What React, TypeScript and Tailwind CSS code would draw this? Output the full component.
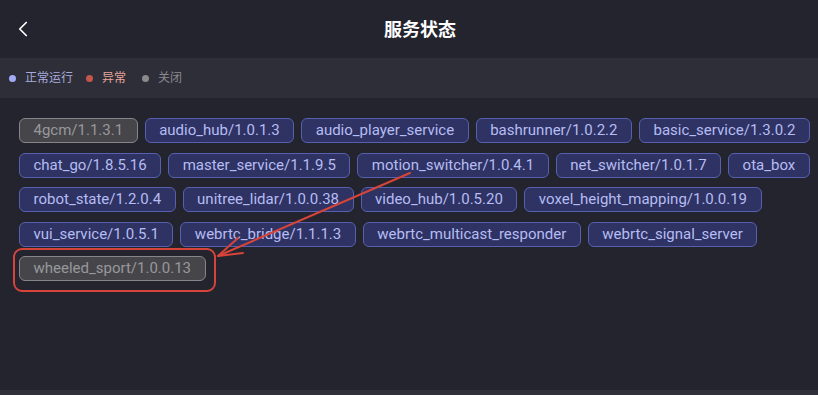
import { ChevronLeft } from 'lucide-react';

type Svc = { name: string; off?: boolean };

// rows as shown on the device
const rows: Svc[][] = [
  [
    { name: '4gcm/1.1.3.1', off: true },
    { name: 'audio_hub/1.0.1.3' },
    { name: 'audio_player_service' },
    { name: 'bashrunner/1.0.2.2' },
    { name: 'basic_service/1.3.0.2' },
  ],
  [
    { name: 'chat_go/1.8.5.16' },
    { name: 'master_service/1.1.9.5' },
    { name: 'motion_switcher/1.0.4.1' },
    { name: 'net_switcher/1.0.1.7' },
    { name: 'ota_box' },
  ],
  [
    { name: 'robot_state/1.2.0.4' },
    { name: 'unitree_lidar/1.0.0.38' },
    { name: 'video_hub/1.0.5.20' },
    { name: 'voxel_height_mapping/1.0.0.19' },
  ],
  [
    { name: 'vui_service/1.0.5.1' },
    { name: 'webrtc_bridge/1.1.1.3' },
    { name: 'webrtc_multicast_responder' },
    { name: 'webrtc_signal_server' },
  ],
  [{ name: 'wheeled_sport/1.0.0.13', off: true }],
];

function Tag({ name, off }: Svc) {
  const look = off
    ? 'bg-[#46464a] border-[#85858a] text-[#98989c]'
    : 'bg-[#2e3363] border-[#5760ae] text-[#b6bcf4]';
  return (
    <div
      className={`h-[25px] px-[13.5px] flex items-center rounded-[6px] border whitespace-nowrap text-[15px] leading-none ${look}`}
    >
      {name}
    </div>
  );
}

export default function App() {
  return (
    <div
      className="w-[818px] h-[395px] bg-[#24242e] flex flex-col overflow-hidden"
      style={{ fontFamily: 'Roboto, "Noto Sans CJK SC", sans-serif' }}
    >
      {/* header */}
      <div className="h-[58px] flex items-center relative">
        <ChevronLeft className="ml-[10px] w-[26px] h-[26px] text-white" strokeWidth={1.6} />
        <div className="absolute left-[22px] right-0 text-center text-white text-[18px] font-bold pointer-events-none">
          服务状态
        </div>
      </div>

      {/* legend */}
      <div className="h-[40px] bg-[#2e2e38] flex items-center pl-[9px] gap-[13px] text-[12px]">
        <div className="flex items-center gap-[9px]">
          <span className="w-[7px] h-[7px] rounded-full bg-[#a3aaf5]" />
          <span className="text-[#a6abdc]">正常运行</span>
        </div>
        <div className="flex items-center gap-[9px]">
          <span className="w-[7px] h-[7px] rounded-full bg-[#c5564b]" />
          <span className="text-[#e7a59b]">异常</span>
        </div>
        <div className="flex items-center gap-[9px] ml-[3px]">
          <span className="w-[7px] h-[7px] rounded-full bg-[#8a8a8c]" />
          <span className="text-[#8a8a8e]">关闭</span>
        </div>
      </div>

      {/* services */}
      <div className="flex-1 relative pt-[20px] pl-[19px]">
        <div className="flex flex-col gap-[9.5px]">
          {rows.map((row, i) => (
            <div key={i} className="flex gap-[7px]">
              {row.map((s) => (
                <Tag key={s.name} name={s.name} off={s.off} />
              ))}
            </div>
          ))}
        </div>

        {/* annotation */}
        <div className="absolute left-[13px] top-[150px] w-[203px] h-[44px] rounded-[9px] border-2 border-[#d6443a]" />
        <svg className="absolute left-0 top-0 pointer-events-none" width="818" height="300">
          <g stroke="#d6443a" strokeWidth="2" fill="none" strokeLinecap="round">
            <line x1="410" y1="75" x2="218" y2="158" />
            <line x1="218" y1="158" x2="238" y2="140" />
            <line x1="218" y1="158" x2="243" y2="155" />
          </g>
        </svg>
      </div>

      <div className="h-[5px] bg-[#30303a]" />
    </div>
  );
}
